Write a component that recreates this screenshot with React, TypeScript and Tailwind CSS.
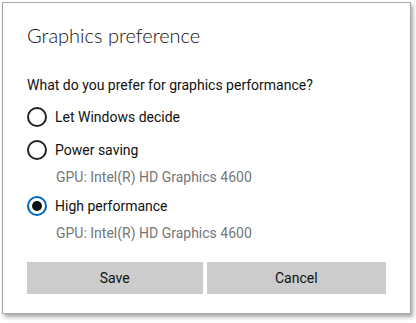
import React, { useState } from "react";

const options = [
  { id: "auto", label: "Let Windows decide", gpu: "" },
  { id: "power", label: "Power saving", gpu: "GPU: Intel(R) HD Graphics 4600" },
  { id: "high", label: "High performance", gpu: "GPU: Intel(R) HD Graphics 4600" },
];

function Radio({ checked }: { checked: boolean }) {
  return (
    <span
      className={
        checked
          ? "flex h-[20px] w-[20px] shrink-0 items-center justify-center rounded-full border-2 border-[#0067c0]"
          : "flex h-[20px] w-[20px] shrink-0 items-center justify-center rounded-full border-2 border-[#222]"
      }
    >
      {checked && <span className="h-[10px] w-[10px] rounded-full bg-[#111]" />}
    </span>
  );
}

export default function App() {
  const [choice, setChoice] = useState("high");

  return (
    <div
      className="h-[323px] w-[416px] bg-white pl-[2px] pt-[2px]"
      style={{ fontFamily: 'Roboto, "Open Sans", sans-serif' }}
    >
      <div className="flex h-[312px] w-[409px] flex-col border border-[#a9a9a9] bg-white px-[24px] shadow-[2px_3px_4px_rgba(0,0,0,0.35)]">
        <h1
          className="mt-[18px] text-[20px] font-light leading-[28px] text-[#111]"
          style={{ fontFamily: "Lato, sans-serif" }}
        >
          Graphics preference
        </h1>

        <p className="mt-[26px] text-[14px] leading-[20px] text-[#111]">
          What do you prefer for graphics performance?
        </p>

        <div className="mt-[12px] flex flex-col gap-[13px]">
          {options.map((o) => (
            <button
              key={o.id}
              onClick={() => setChoice(o.id)}
              className="flex flex-col items-start text-left"
            >
              <span className="flex items-center gap-[8px]">
                <Radio checked={choice === o.id} />
                <span className="text-[14px] leading-[20px] text-[#111]">{o.label}</span>
              </span>
              {o.gpu && (
                <span className="mt-[7px] mb-[-4px] pl-[29px] text-[14px] leading-[20px] text-[#767676]">
                  {o.gpu}
                </span>
              )}
            </button>
          ))}
        </div>

        <div className="mt-auto mb-[19px] flex gap-[4px]">
          <button className="h-[32px] w-[176px] bg-[#cccccc] text-[14px] text-[#111]">Save</button>
          <button className="h-[32px] w-[180px] bg-[#cccccc] text-[14px] text-[#111]">Cancel</button>
        </div>
      </div>
    </div>
  );
}
